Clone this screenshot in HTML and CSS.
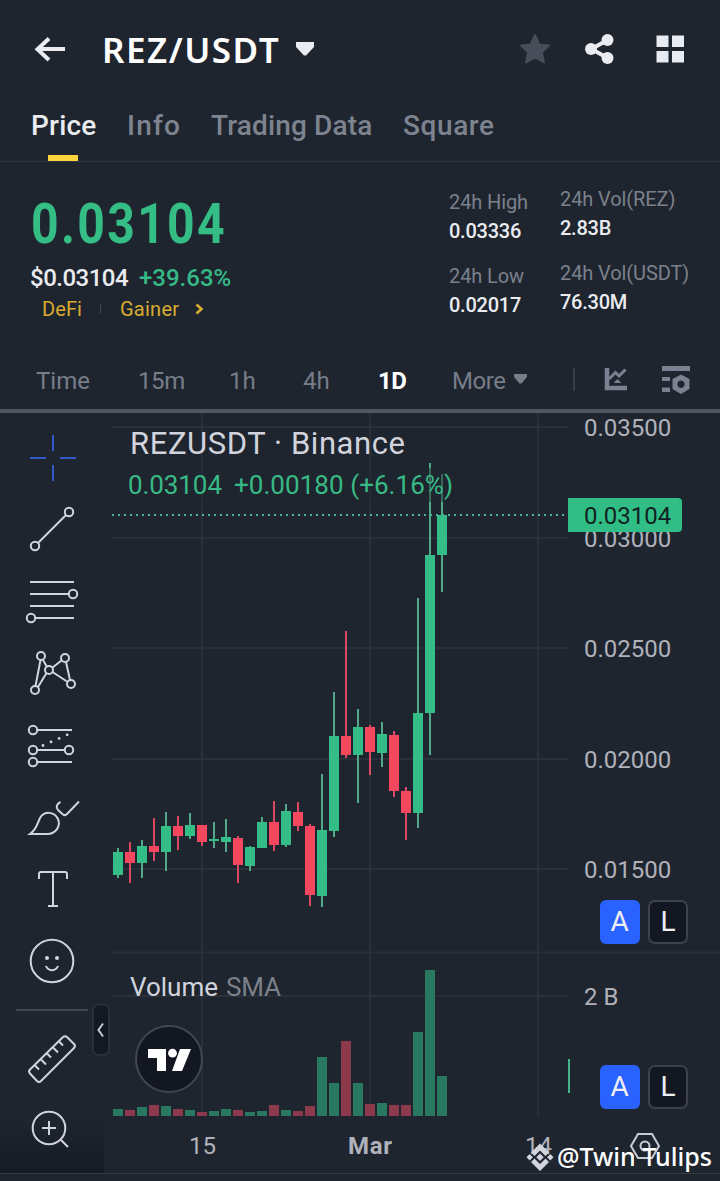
FILE: index.html
```html
<!DOCTYPE html>
<html lang="en">
<head>
<meta charset="utf-8">
<title>REZ/USDT</title>
<link rel="stylesheet" href="styles.css">
</head>
<body>
<main class="app">
  <header class="header">
    <svg class="back" viewBox="33 34 34 30"><path d="M65 49H37M49 38.500L37.500 49.200L49 60"/></svg>
    <h1 class="pair">REZ/USDT</h1>
    <svg class="caret" viewBox="0 0 18 14"><path d="M0 0H18V5L10 13.500H8L0 5Z"/></svg>
    <div class="actions">
      <svg class="star" width="32" height="32" viewBox="519 33 32 32"><path d="M535 35L539.200 44.500L549 45.500L541.800 52.200L544 62.500L535 57.500L526 62.500L528.200 52.200L521 45.500L530.800 44.500Z"/></svg>
      <svg class="share" width="32" height="32" viewBox="583 33 32 32"><path d="M607.500 40L591.500 49L607.500 58"/><circle cx="591" cy="49" r="6"/><circle cx="607.500" cy="40" r="6"/><circle cx="607.500" cy="58" r="6"/></svg>
      <svg class="apps" width="32" height="32" viewBox="654 33 32 32"><path d="M656.500 35.500h12v11.500h-12zM672 35.500h12v11.500h-12zM656.500 51h12v11.500h-12zM672 51h12v11.500h-12z"/></svg>
    </div>
  </header>

  <nav class="tabs">
    <span class="tab tab-price active">Price</span>
    <span class="tab tab-info">Info</span>
    <span class="tab tab-data">Trading Data</span>
    <span class="tab tab-square">Square</span>
  </nav>

  <section class="ticker">
    <div class="quote">
      <div class="last">0.03104</div>
      <div class="fiat"><span class="usd">$0.03104</span><span class="pct">+39.63%</span></div>
      <div class="tags"><span class="defi">DeFi</span><i class="bar"></i><span class="gainer">Gainer</span><svg class="chev" viewBox="0 0 9 12"><path d="M1.500 1.500L6.500 6L1.500 10.500"/></svg></div>
    </div>
    <dl class="stats">
      <dt>24h High</dt><dd>0.03336</dd>
      <dt>24h Low</dt><dd>0.02017</dd>
    </dl>
    <dl class="stats volumes">
      <dt>24h Vol(REZ)</dt><dd>2.83B</dd>
      <dt>24h Vol(USDT)</dt><dd>76.30M</dd>
    </dl>
  </section>

  <nav class="intervals">
    <span class="i-time">Time</span><span class="i-15m">15m</span><span class="i-1h">1h</span><span class="i-4h">4h</span><span class="i-1d">1D</span><span class="i-more">More</span>
    <svg class="more-caret" viewBox="0 0 13 10"><path d="M0 0H13V3L7.500 9.500H5.500L0 3Z"/></svg>
    <i class="rule"></i>
    <svg class="chart-type" width="24" height="24" viewBox="604 367 24 24"><path class="axes" d="M607 368V388H627"/><path class="trend" d="M609 379L615.500 372.500L619 376L625.500 369.500"/><path class="fill" d="M613.500 383L617.500 379L621.500 383Z"/></svg>
    <svg class="settings" width="30" height="30" viewBox="661 365 30 30"><path d="M662 366h28v5h-28zM662 377h8v4h-8zM662 387.500h8v4.500h-8z"/><path fill-rule="evenodd" d="M681 374.500L689.500 379V389L681 394L672.500 389V379ZM681 380.500a3.700 3.700 0 1 0 .01 0Z"/></svg>
  </nav>

  <section class="workspace">
    <aside class="tools">
      <svg class="tool" viewBox="0 422 104 72"><path class="blue" d="M53 435V451M53 465V481M30 458H46M60 458H76"/></svg>
      <svg class="tool" viewBox="0 494 104 72"><path d="M38 543L66 515"/><circle cx="35" cy="546" r="4.200"/><circle cx="69" cy="512" r="4.200"/></svg>
      <svg class="tool" viewBox="0 566 104 72"><path d="M30 582H74M30 594H68M30 606H74M35 618H74"/><circle cx="73" cy="594" r="4.200"/><circle cx="31" cy="618" r="4.200"/></svg>
      <svg class="tool" viewBox="0 638 104 72"><path d="M40.500 660L35.500 686M43 660L47 667M52.500 667.500L61.500 660.500M52.500 672L67 681.500M66 662L70 680M46.500 673L38 687"/><circle cx="41" cy="656" r="4"/><circle cx="65" cy="658" r="4"/><circle cx="49" cy="670" r="4"/><circle cx="35" cy="690" r="4"/><circle cx="71" cy="684" r="4"/></svg>
      <svg class="tool" viewBox="0 710 104 72"><path d="M37 730H72M37 750H65M37 762H72"/><circle cx="33" cy="730" r="4.200"/><circle cx="33" cy="750" r="4.200"/><circle cx="69" cy="750" r="4.200"/><circle cx="33" cy="762" r="4.200"/><path class="dots" d="M43 745.500L69 734"/></svg>
      <svg class="tool" viewBox="0 782 104 72"><path d="M30 834C37 829 37 824 40 818C44 811 54 811 58 819C61 826 56 834 47 834ZM60.500 802C56 804 56 808 58 810L63 814.500Q65 816 67 814L79 801.500"/></svg>
      <svg class="tool" viewBox="0 854 104 72"><path d="M39 879V874Q39 872 41 872H65Q67 872 67 874V879M53 872V906M48 906H58"/></svg>
      <svg class="tool" viewBox="0 926 104 72"><circle cx="52" cy="961" r="21.300"/><path d="M46 966C48 971.500 56 971.500 58 966"/><circle class="eye" cx="47" cy="958" r="2"/><circle class="eye" cx="57" cy="958" r="2"/></svg>
      <i class="tool-rule"></i>
      <svg class="tool" viewBox="0 1023 104 72"><path d="M30 1069.500L63 1037Q65 1035.500 67 1037L74 1044Q76 1046 74 1048L41 1081Q39 1083 37 1081L30 1073.500Q28 1071.500 30 1069.500ZM35 1065.500L39 1069.500M41 1059.500L46 1064.500M47 1053.500L51 1057.500M53 1047.500L58 1052.500M59 1041.500L63 1045.500"/></svg>
      <svg class="tool" viewBox="0 1095 104 72"><circle cx="49" cy="1128" r="16.300"/><path d="M42 1128H56M49 1121V1135M61 1140L68 1147"/></svg>
      <svg class="collapse" viewBox="92 1003 18 54"><rect x="93" y="1004.500" width="16" height="50.500" rx="6"/><path d="M103 1023.500L98.500 1030L103 1036.500"/></svg>
    </aside>
    <svg class="chart" width="616" height="760" viewBox="104 413 616 760">
      <path class="grid" d="M112 427H568M112 538H568M112 648H568M112 759H568M112 869H568M112 952.500H720M112 996H568M202 413V1116M370 413V1116M538 413V1116"/>
      <g id="volume"></g>
      <g id="candles"></g>
      <path class="price-line" d="M112 515H568"/>
      <rect class="veil" x="122" y="468" width="336" height="34"/>
      <text class="symbol" x="130" y="454" textLength="275">REZUSDT · Binance</text>
      <text class="change" x="128" y="494" textLength="94">0.03104</text>
      <text class="change" x="234" y="494" textLength="219">+0.00180 (+6.16%)</text>
      <g class="scale">
        <text x="584" y="436">0.03500</text>
        <text x="584" y="547">0.03000</text>
        <text x="584" y="657">0.02500</text>
        <text x="584" y="768">0.02000</text>
        <text x="584" y="878">0.01500</text>
        <text x="584" y="1005">2 B</text>
        <text x="189" y="1154">15</text>
        <text class="month" x="348" y="1154" textLength="44">Mar</text>
        <text x="525" y="1154">14</text>
      </g>
      <path class="flag" d="M568 498H678Q682 498 682 502V528Q682 532 678 532H568Z"/>
      <text class="flag-text" x="584" y="524">0.03104</text>
      <text class="study" x="130" y="996" textLength="88">Volume</text>
      <text class="study sma" x="226" y="996" textLength="55">SMA</text>
      <circle class="tv" cx="169" cy="1059" r="33"/>
      <path class="tv-mark" d="M148 1049H166V1071H157V1058H148ZM180 1049H191L182 1071H172Z"/><circle class="tv-mark" cx="172.500" cy="1053.200" r="4.400"/>
      <path class="volume-tick" d="M569 1059V1093"/>
      <g class="modes">
        <rect class="on" x="600" y="900" width="40" height="44" rx="6"/><text x="610.500" y="931">A</text>
        <rect class="off" x="649" y="901" width="38" height="42" rx="6"/><text x="660.500" y="931">L</text>
        <rect class="on" x="600" y="1065" width="40" height="44" rx="6"/><text x="610.500" y="1096">A</text>
        <rect class="off" x="649" y="1066" width="38" height="42" rx="6"/><text x="660.500" y="1096">L</text>
      </g>
      <g class="hex"><path d="M638 1134H652L659 1146L652 1158H638L631 1146Z"/><circle cx="645" cy="1146" r="4.500"/></g>
      <g class="credit">
        <path d="M540 1143.500L549 1152.500L545.500 1156L540 1150.500L534.500 1156L531 1152.500ZM540 1171L549 1162L545.500 1158.500L540 1164L534.500 1158.500L531 1162ZM540 1153.500L543.700 1157.200L540 1161L536.300 1157.200ZM529.700 1154L533 1157.200L529.700 1160.500L526.500 1157.200ZM550.300 1154L553.500 1157.200L550.300 1160.500L547 1157.200Z"/>
        <text x="557" y="1166" textLength="155" lengthAdjust="spacingAndGlyphs">@Twin Tulips</text>
      </g>
    </svg>
  </section>
</main>
<script src="chart.js"></script>
</body>
</html>
```
FILE: styles.css
```css
* { box-sizing: border-box; }
body { margin: 0; background: #1f252f; font-family: Roboto, "Liberation Sans", sans-serif; color: #eaecef; }
.app { width: 720px; height: 1181px; overflow: hidden; }
svg { display: block; flex: none; overflow: visible; }
i { display: block; flex: none; }

.header { display: flex; align-items: center; height: 98px; padding: 0 34px 0 33px; }
.back { width: 34px; height: 30px; fill: none; stroke: #eaecf1; stroke-width: 4; }
.pair { width: 194px; margin: 2px 0 0 35px; font: 600 35px/40px "Noto Sans", sans-serif; letter-spacing: 1.5px; color: #fff; white-space: nowrap; }
.caret { width: 18px; height: 14px; fill: #eaecf1; }
.actions { display: flex; margin-left: auto; }
.star { fill: #474d59; stroke: #474d59; stroke-width: 2; stroke-linejoin: round; }
.share { margin-left: 32px; fill: #eaecf1; }
.share path { fill: none; stroke: #eaecf1; stroke-width: 4; }
.apps { margin-left: 39px; fill: #e8ebf1; }

.tabs { display: flex; height: 64px; padding-left: 31px; border-bottom: 1px solid #303640; font: 500 28px/55px Roboto, sans-serif; color: #7d838f; white-space: nowrap; }
.tab { position: relative; }
.tab-price { width: 96px; letter-spacing: 0.2px; }
.tab-info { width: 84px; letter-spacing: 1.2px; }
.tab-data { width: 192px; letter-spacing: 0.15px; }
.tab-square { letter-spacing: 0.6px; }
.active { color: #eaecef; }
.active::after { content: ""; position: absolute; left: 17px; bottom: 0; width: 30px; height: 6px; background: #fcd23d; }

.ticker { display: flex; height: 183px; padding: 24px 0 0 31px; }
.quote { width: 418px; }
.last { height: 76px; font: 700 56px/76px Roboto, sans-serif; letter-spacing: 2.7px; color: #35bd86; transform: scaleX(0.86); transform-origin: 0 50%; }
.fiat { display: flex; font: 500 24px/32px Roboto, sans-serif; }
.usd { width: 108px; margin-left: -1px; letter-spacing: -0.5px; }
.pct { margin-left: 1px; color: #35b987; }
.tags { display: flex; align-items: center; padding-left: 11px; font-size: 20px; line-height: 30px; color: #d9ac31; }
.defi { width: 58px; letter-spacing: 0.1px; }
.bar { width: 1px; height: 10px; margin-right: 19px; background: #3d444f; }
.gainer { width: 75px; letter-spacing: 0.25px; }
.chev { width: 9px; height: 12px; fill: none; stroke: #d9ac31; stroke-width: 2.6; }
.stats { width: 111px; margin: 2px 0 0; font-size: 20px; line-height: 29px; white-space: nowrap; }
.stats dt { letter-spacing: -0.1px; color: #7b818c; }
.stats dd { margin: 0 0 16px; font-weight: 500; letter-spacing: -0.25px; }
.volumes { margin-top: -1px; }

.intervals { display: flex; align-items: center; height: 64px; padding: 8px 0 0 36px; font-size: 24px; line-height: 32px; color: #777d89; white-space: nowrap; }
.i-time { width: 102px; }
.i-15m { width: 91px; letter-spacing: -0.4px; }
.i-1h { width: 74px; }
.i-4h { width: 75px; }
.i-1d { width: 74px; font-weight: 700; letter-spacing: -0.5px; color: #fff; }
.i-more { width: 62px; letter-spacing: -0.4px; }
.more-caret { width: 13px; height: 10px; margin-top: -4px; fill: #777d89; }
.rule { width: 2px; height: 23px; margin: -4px 29px 0 46px; background: #363c47; }
.chart-type { margin-top: -4px; fill: none; stroke: #7a8190; }
.axes { stroke-width: 4.5; }
.trend { stroke-width: 3; }
.fill { fill: #7a8190; stroke: none; }
.settings { margin: -2px 0 0 33px; fill: #7a8190; }

.workspace { display: flex; height: 765px; border-top: 4px solid #515761; border-bottom: 1px solid #343a44; }
.tools { position: relative; width: 104px; padding-top: 9px; background: linear-gradient(#1f252f 93%, #151a24); }
.tool { width: 104px; height: 72px; fill: none; stroke: #d1d4dc; stroke-width: 2; }
.blue { stroke: #3159c8; }
.dots { stroke-width: 2.8; stroke-linecap: round; stroke-dasharray: 0 8.8; }
.eye { fill: #d1d4dc; stroke: none; }
.tool-rule { height: 2px; margin: 11px 16px 12px; background: #434751; }
.collapse { position: absolute; left: 92px; top: 590px; width: 18px; height: 54px; fill: #131821; stroke: #2a303a; stroke-width: 2; }
.collapse path { fill: none; stroke: #c4c8d0; }

.chart { font-family: Roboto, sans-serif; }
.grid { fill: none; stroke: #2a303a; stroke-width: 2; }
.up { fill: #35bd87; }
.down { fill: #f5475d; }
.up-wick { fill: #51a987; }
.down-wick { fill: #db4a62; }
.up-vol { fill: #297860; }
.down-vol { fill: #8c394b; }
.price-line { stroke: #50b38d; stroke-width: 2; stroke-dasharray: 2 4; }
.veil { fill: #1f252f; opacity: 0.5; }
.symbol { font-size: 31px; fill: #d1d4dc; }
.change { font-size: 26px; fill: #37ba86; }
.scale { font-size: 24px; fill: #afb2bb; }
.month { font-weight: 700; }
.flag { fill: #31bd86; }
.flag-text { font-size: 24px; fill: #10241f; }
.study { font-size: 26px; fill: #d1d4dc; }
.sma { fill: #7c808a; }
.tv { fill: #131722; stroke: #42464f; stroke-width: 2; }
.tv-mark { fill: #fff; }
.volume-tick { stroke: #42b487; stroke-width: 2; }
.on { fill: #2962ff; }
.off { fill: #131722; stroke: #3d414a; stroke-width: 2; }
.modes text { font-size: 28px; fill: #eceef3; }
.hex { fill: none; stroke: #c9ccd4; stroke-width: 2; }
.credit path { fill: #d2d5dd; }
.credit text { font: 500 25px "Noto Sans", sans-serif; fill: #fff; }
```
FILE: chart.js
```js
// Each row: direction, high, low, body top, body bottom, volume top.
const rows = [
  ['up', 848, 878, 852, 875, 1109], ['down', 842, 883, 852, 863, 1110],
  ['up', 840, 878, 846, 863, 1107], ['down', 818, 861, 846, 852, 1105],
  ['up', 812, 871, 826, 852, 1106], ['down', 816, 850, 826, 836, 1109],
  ['up', 813, 839, 825, 836, 1110], ['down', 825, 846, 825, 842, 1112],
  ['up', 822, 848, 839, 841, 1111], ['up', 819, 852, 837, 842, 1109],
  ['down', 836, 883, 838, 865, 1110], ['up', 846, 871, 847, 866, 1112],
  ['up', 817, 848, 822, 848, 1111], ['down', 801, 851, 822, 845, 1105],
  ['up', 804, 847, 811, 845, 1110], ['down', 802, 831, 812, 826, 1111],
  ['down', 824, 906, 826, 895, 1106], ['up', 774, 907, 830, 896, 1057],
  ['up', 692, 837, 736, 831, 1083], ['down', 631, 758, 736, 755, 1041],
  ['up', 709, 803, 727, 755, 1083], ['down', 725, 775, 727, 752, 1104],
  ['up', 722, 767, 734, 753, 1103], ['down', 731, 797, 735, 791, 1105],
  ['down', 787, 840, 791, 813, 1105], ['up', 598, 828, 713, 813, 1032],
  ['up', 463, 755, 555, 713, 970], ['up', 474, 592, 515, 555, 1076]
];

function bar(parent, kind, x, y, width, bottom) {
  const rect = document.createElementNS('http://www.w3.org/2000/svg', 'rect');
  rect.setAttribute('class', kind);
  rect.setAttribute('x', x);
  rect.setAttribute('y', y);
  rect.setAttribute('width', width);
  rect.setAttribute('height', bottom - y);
  parent.appendChild(rect);
}

const candles = document.getElementById('candles');
const volume = document.getElementById('volume');
rows.forEach(([kind, high, low, top, bottom, vol], i) => {
  const x = 113 + i * 12;
  bar(candles, kind + '-wick', x + 4, high, 2, low);
  bar(candles, kind, x, top, 10, bottom);
  bar(volume, kind + '-vol', x, vol, 10, 1116);
});
```
